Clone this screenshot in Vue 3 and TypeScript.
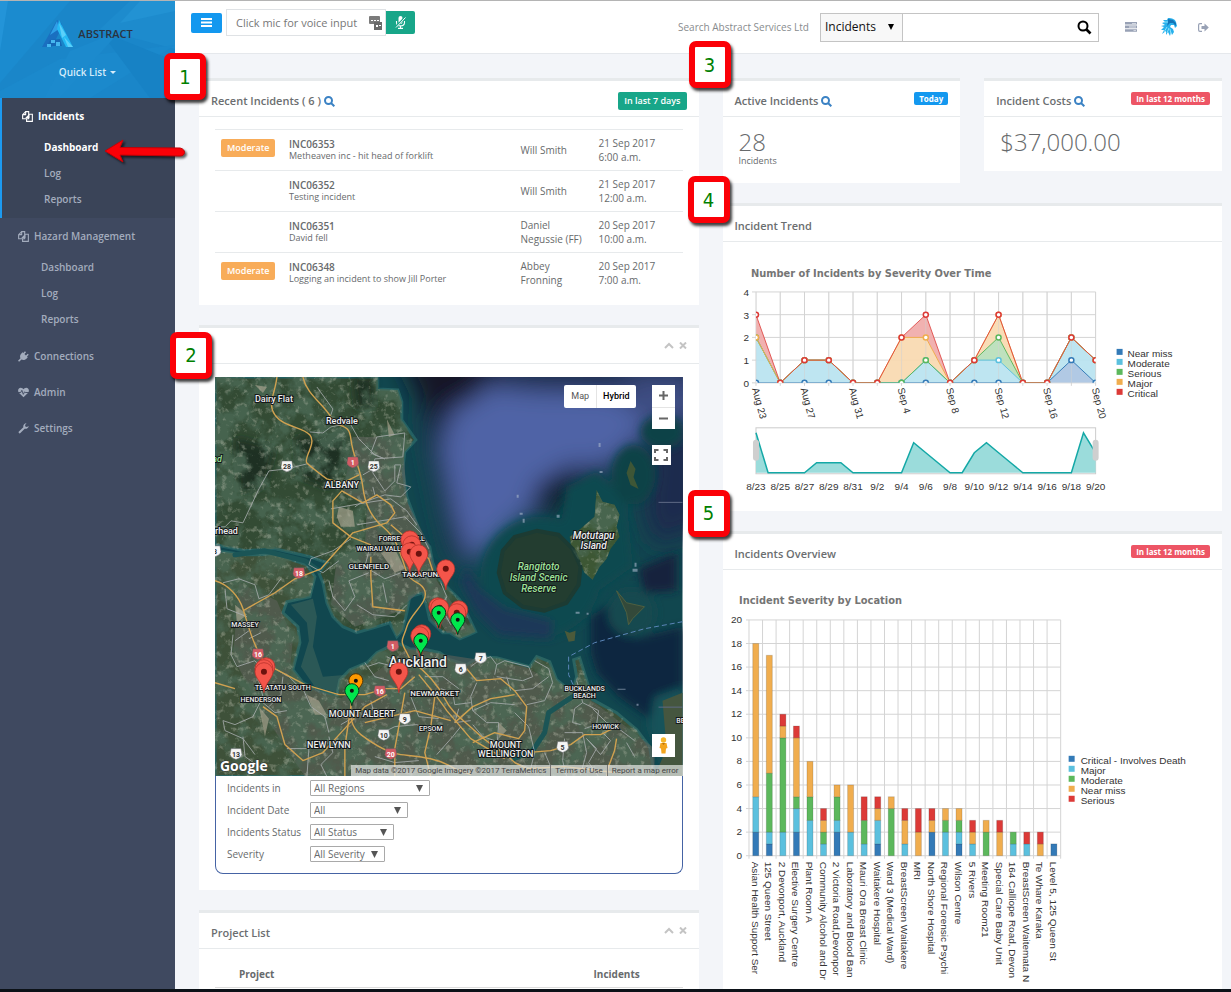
<script setup lang="ts">
interface NavGroup { label: string; icon: string; active?: boolean; items: string[] }
interface Incident { severity: string; code: string; title: string; person: string; date: string; time: string }
interface MapLabel { x: number; y: number; size: number; text: string; green?: boolean }
interface Shield { x: number; y: number; text: string; red?: boolean }
interface Pin { x: number; y: number; kind: 'red' | 'green' | 'orange' }

const navGroups: NavGroup[] = [
  { label: 'Incidents', icon: 'copy', active: true, items: ['Dashboard', 'Log', 'Reports'] },
  { label: 'Hazard Management', icon: 'copy', items: ['Dashboard', 'Log', 'Reports'] },
  { label: 'Connections', icon: 'plug', items: [] },
  { label: 'Admin', icon: 'heart', items: [] },
  { label: 'Settings', icon: 'wrench', items: [] },
]

const incidents: Incident[] = [
  { severity: 'Moderate', code: 'INC06353', title: 'Metheaven inc - hit head of forklift', person: 'Will Smith', date: '21 Sep 2017', time: '6:00 a.m.' },
  { severity: '', code: 'INC06352', title: 'Testing incident', person: 'Will Smith', date: '21 Sep 2017', time: '12:00 a.m.' },
  { severity: '', code: 'INC06351', title: 'David fell', person: 'Daniel Negussie (FF)', date: '20 Sep 2017', time: '10:00 a.m.' },
  { severity: 'Moderate', code: 'INC06348', title: 'Logging an incident to show Jill Porter', person: 'Abbey Fronning', date: '20 Sep 2017', time: '7:00 a.m.' },
]

const filters = [
  { id: 'regions', label: 'Incidents in', value: 'All Regions', size: 'w-xl' },
  { id: 'date', label: 'Incident Date', value: 'All', size: 'w-lg' },
  { id: 'status', label: 'Incidents Status', value: 'All Status', size: 'w-md' },
  { id: 'severity', label: 'Severity', value: 'All Severity', size: 'w-sm' },
]

const palette = ['#337ab7', '#5bc0de', '#5cb85c', '#f0ad4e', '#dc3a37']

/* Severity trend */
const trend = { left: 33, right: 373, top: 50, bottom: 141 }
const trendX = (i: number) => trend.left + (i * (trend.right - trend.left)) / 14
const trendY = (v: number) => trend.bottom - (v * (trend.bottom - trend.top)) / 4
const trendSeries = [
  { name: 'Near miss', values: [0, 0, 0, 0, 0, 0, 0, 0, 0, 0, 0, 0, 0, 1, 0] },
  { name: 'Moderate', values: [2, 0, 1, 1, 0, 0, 0, 1, 0, 1, 1, 0, 0, 2, 1] },
  { name: 'Serious', values: [2, 0, 1, 1, 0, 0, 0, 1, 0, 1, 2, 0, 0, 2, 1] },
  { name: 'Major', values: [2, 0, 1, 1, 0, 0, 2, 2, 0, 1, 3, 0, 0, 2, 1] },
  { name: 'Critical', values: [3, 0, 1, 1, 0, 0, 2, 3, 0, 1, 3, 0, 0, 2, 1] },
]
const fills = ['#aac4e2', '#b9e3f0', '#b9deb9', '#f9d9b0', '#f0aaa9']
const trendLine = (values: number[]) => values.map((v, i) => `${trendX(i)},${trendY(v)}`).join(' ')
const trendArea = (s: number) => {
  const base = s === 0 ? trendSeries[0].values.map(() => 0) : trendSeries[s - 1].values
  const back = base.map((v, i) => `${trendX(i)},${trendY(v)}`).reverse().join(' ')
  return `${trendLine(trendSeries[s].values)} ${back}`
}
const trendTicks = ['Aug 23', 'Aug 27', 'Aug 31', 'Sep 4', 'Sep 8', 'Sep 12', 'Sep 16', 'Sep 20']
const rangeTicks = ['8/23', '8/25', '8/27', '8/29', '8/31', '9/2', '9/4', '9/6', '9/8', '9/10', '9/12', '9/14', '9/16', '9/18', '9/20']
const rangeValues = [4, 0, 0, 0, 0, 1, 1, 1, 0, 0, 0, 0, 0, 3, 2, 1, 0, 0, 2, 3, 2, 1, 0, 0, 0, 0, 0, 4, 2]
const rangePoints = rangeValues.map((v, i) => `${trend.left + (i * 340) / 28},${231 - v * 10}`).join(' ')

/* Severity by location */
const bars = { left: 26, right: 338, top: 50, bottom: 286 }
const step = (bars.right - bars.left) / 23
const unit = (bars.bottom - bars.top) / 20
const overviewLegend = ['Critical - Involves Death', 'Major', 'Moderate', 'Near miss', 'Serious']
const locations: { name: string; stack: number[] }[] = [
  { name: 'Asian Health Support Ser', stack: [2, 3, 0, 13, 0] },
  { name: '125 Queen Street', stack: [1, 1, 5, 10, 0] },
  { name: '2 Devonport, Auckland', stack: [0, 2, 8, 1, 1] },
  { name: 'Elective Surgery Centre', stack: [2, 2, 1, 5, 1] },
  { name: 'Plant Room A', stack: [0, 3, 2, 3, 0] },
  { name: 'Community Alcohol and Dr', stack: [0, 1, 1, 1, 1] },
  { name: '2 Victoria Road,Devonpor', stack: [2, 1, 2, 1, 0] },
  { name: 'Laboratory and Blood Ban', stack: [0, 2, 0, 4, 0] },
  { name: 'Mauri Ora Breast Clinic', stack: [0, 1, 2, 0, 2] },
  { name: 'Waitakere Hospital', stack: [1, 2, 0, 1, 1] },
  { name: 'Ward 3 (Medical Ward)', stack: [0, 0, 4, 1, 0] },
  { name: 'BreastScreen Waitakere', stack: [0, 1, 0, 2, 1] },
  { name: 'MRI', stack: [0, 0, 0, 2, 2] },
  { name: 'North Shore Hospital', stack: [2, 0, 0, 1, 1] },
  { name: 'Regional Forensic Psychi', stack: [0, 2, 1, 1, 0] },
  { name: 'Wilson Centre', stack: [1, 1, 1, 1, 0] },
  { name: '5 Rivers', stack: [0, 1, 0, 1, 1] },
  { name: 'Meeting Room21', stack: [0, 0, 2, 1, 0] },
  { name: 'Special Care Baby Unit', stack: [0, 0, 0, 2, 1] },
  { name: '164 Calliope Road, Devon', stack: [0, 1, 1, 0, 0] },
  { name: 'BreastScreen Waitemata N', stack: [0, 1, 0, 0, 1] },
  { name: 'Te Whare Karaka', stack: [0, 0, 0, 1, 1] },
  { name: 'Level 5, 125 Queen St', stack: [1, 0, 0, 0, 0] },
]
const segments = locations.flatMap((loc, i) => {
  let total = 0
  return loc.stack.map((v, s) => {
    total += v
    return { x: bars.left + step * (i + 0.5) - 3, y: bars.bottom - total * unit, h: v * unit, color: palette[s] }
  }).filter((seg) => seg.h > 0)
})

/* Map */
const north = 'M0 0H163V12L183 13L187 25V43L201 63L190 75L188 92L192 120L198 136L203 150L207 160L215 170L218 186L225 203L235 213L245 223L252 236L261 255L255 258L245 262L235 256L228 256L215 243L212 230L208 216L195 220L192 236L188 253L182 260L175 246L162 250L142 256L128 250L118 240L112 226L108 206L104 196L112 186L95 180L60 172L30 174L0 168Z'
const west = 'M0 174L30 178L62 178L92 188L100 200L95 220L72 225L68 236L83 250L85 266L78 293L88 306L105 315L122 318L125 303L135 293L152 286L162 276L182 266L195 272L212 273L225 276L235 283L252 288L265 280L282 281L315 290L322 280L335 285L342 303L358 316L362 300L359 283L365 281L371 300L378 323L402 336L422 353L435 370L440 400H0Z'
const motutapu = 'M382 113L388 125L400 128L405 138L402 150L405 160L396 172L392 182L385 190L378 203L370 196L363 182L357 172L355 160L366 152L380 140Z'
const rangitoto = 'M300 160L322 154L344 158L358 172L366 190L364 208L352 226L330 234L308 230L290 216L284 196L288 174Z'
const highways = [
  'M62 0C60 18 52 26 60 38S88 50 95 58S88 82 92 86S104 96 112 102L127 106',
  'M88 0C92 18 108 26 116 40S134 44 136 62S146 92 148 110S156 140 168 150S184 170 190 190S206 202 210 214S196 236 192 250S184 262 192 276L196 284',
  'M0 204C14 208 24 220 28 232S36 262 44 276S50 288 56 290L90 308L124 318H150L170 312L186 312L200 300',
  'M28 234L60 216L80 202L106 192L122 174L138 156L172 146L180 136L176 128L162 118L148 126L127 114L118 124V146L136 160L156 168',
  'M128 106L144 98M176 148L190 160L214 182L218 194M156 180V200L158 230L190 234',
  'M138 320C132 340 138 352 146 358S170 376 186 378S220 380 240 392L256 398',
  'M48 330L62 340L70 368L88 384L108 376L128 354L150 330L172 318',
  'M196 284C210 294 222 306 230 322S250 344 262 356S288 374 300 386L312 392L350 390L400 396M204 298C214 310 224 322 232 334L256 362L290 382',
  'M252 292L262 304L286 302L300 314L312 330L310 354L304 362L280 356L258 366M240 346L258 330L276 322L300 318M312 376L336 374L356 368L370 358L386 358L402 350M402 362L400 374L394 390L392 400',
  'M190 316L184 350L180 372V400M220 320L216 350L210 376L216 400M130 400V370L136 330M0 306L20 312M150 346L200 334L236 344',
]
const streets = [
  'M102 10L118 32L116 38M95 55L108 56L116 50L136 46M136 48L144 62L160 78L170 82L156 76L162 60L190 56L188 80L160 82L158 96L170 114L180 104V88L186 88L182 106L196 110L186 120L170 118L146 126L140 130',
  'M92 87L72 92L54 94L44 112L28 146L16 144L10 150H0',
  'M148 98L162 90M158 110L160 118M116 132L150 126L176 122L192 134L202 148M142 148L190 140L206 156L214 172M136 162L118 174L96 182L94 188L108 196L124 184M154 174L150 190L170 202L186 196',
  'M114 204L118 220L130 234L140 220L134 204L154 196M142 228L158 238L180 240L192 228M168 206L172 226M226 206L232 220L226 230L236 248',
  'M8 206L24 202L40 208L44 222L54 218L66 202M10 212L12 232L32 240M18 258L16 278L22 290L40 284L46 292M20 264L34 254M34 262L46 256M60 292L74 300L84 310M68 300L66 318L54 330M40 290L48 320L38 340L20 348L8 344L10 354L28 362L40 378M48 326L60 336L72 334M28 360L30 380L50 394M88 312L96 330L110 340L114 356M72 372L94 372L92 400',
  'M114 360L118 376L106 388L112 400M126 348L140 340L128 336M150 286L160 300L174 304M152 290L164 286L180 290L196 282M172 280L192 290L212 286M200 278L208 292L222 280M210 300L228 300L244 312M156 324L160 340L178 338M164 358L180 350L202 348L222 356M160 380L180 386L204 384M196 320L204 340L224 342M226 312L238 316L240 328L256 326M222 378L238 360L246 350',
  'M256 290L264 284L276 280L282 288L280 298M282 288L290 284L314 290L318 300L308 304L282 300M320 284L334 292L338 306L330 324L312 328M300 314L318 312L334 300M262 306L256 320L258 334L272 346L284 346L282 376M258 334L276 326L300 328M292 300L296 314M258 348L268 360L280 364M244 332L240 346L256 344M300 336L314 350L320 376L316 392L300 386',
  'M362 304L366 316L368 326L360 332L358 346L366 348M368 326L384 334L382 348L370 352M378 332L392 346L404 350M350 356L368 356L372 376L366 398M350 362L348 384L352 400M372 362L382 372L374 386L384 400M388 356L396 364L386 378L372 362M404 352L420 364M412 366L420 380M330 376L336 390',
]
const labels: MapLabel[] = [
  { x: 59, y: 25, size: 9, text: 'Dairy Flat' }, { x: 127, y: 47, size: 9, text: 'Redvale' },
  { x: 127, y: 111, size: 9, text: 'ALBANY' }, { x: 9, y: 157, size: 9, text: 'erhead' }, { x: 2, y: 85, size: 9, text: 'ad', green: true },
  { x: 187, y: 164, size: 7, text: 'FORREST HILL' }, { x: 168, y: 174, size: 7, text: 'WAIRAU VALLEY' },
  { x: 154, y: 192, size: 8, text: 'GLENFIELD' }, { x: 208, y: 200, size: 8, text: 'TAKAPUNA' },
  { x: 379, y: 162, size: 10, text: 'Motutapu' }, { x: 379, y: 172, size: 10, text: 'Island' },
  { x: 324, y: 193, size: 10, text: 'Rangitoto', green: true }, { x: 324, y: 204, size: 10, text: 'Island Scenic', green: true }, { x: 324, y: 215, size: 10, text: 'Reserve', green: true },
  { x: 30, y: 250, size: 7, text: 'MASSEY' }, { x: 68, y: 313, size: 7, text: 'TE ATATU SOUTH' }, { x: 46, y: 325, size: 7, text: 'HENDERSON' },
  { x: 203, y: 290, size: 14, text: 'Auckland' }, { x: 220, y: 319, size: 8, text: 'NEWMARKET' },
  { x: 147, y: 340, size: 9, text: 'MOUNT ALBERT' }, { x: 216, y: 354, size: 7, text: 'EPSOM' }, { x: 114, y: 371, size: 9, text: 'NEW LYNN' },
  { x: 370, y: 314, size: 7, text: 'BUCKLANDS' }, { x: 370, y: 321, size: 7, text: 'BEACH' }, { x: 391, y: 352, size: 7, text: 'HOWICK' },
  { x: 291, y: 371, size: 9, text: 'MOUNT' }, { x: 291, y: 380, size: 9, text: 'WELLINGTON' }, { x: 466, y: 346, size: 7, text: 'BE' },
]
const shields: Shield[] = [
  { x: 138, y: 85, text: '1', red: true }, { x: 72, y: 89, text: '28' }, { x: 159, y: 89, text: '25' }, { x: 0, y: 174, text: '3' },
  { x: 84, y: 196, text: '18', red: true }, { x: 43, y: 277, text: '16', red: true }, { x: 178, y: 269, text: '1', red: true },
  { x: 165, y: 314, text: '16', red: true }, { x: 190, y: 342, text: '9' }, { x: 169, y: 358, text: '10' }, { x: 176, y: 377, text: '20', red: true },
  { x: 21, y: 377, text: '13' }, { x: 266, y: 281, text: '7' }, { x: 246, y: 292, text: '6' }, { x: 348, y: 370, text: '5' },
]
const pins: Pin[] = [
  { x: 195, y: 163, kind: 'red' }, { x: 197, y: 168, kind: 'red' }, { x: 195, y: 175, kind: 'red' }, { x: 204, y: 177, kind: 'red' }, { x: 231, y: 192, kind: 'red' },
  { x: 223, y: 230, kind: 'red' }, { x: 225, y: 231, kind: 'red' }, { x: 224, y: 236, kind: 'green' },
  { x: 244, y: 233, kind: 'red' }, { x: 242, y: 236, kind: 'red' }, { x: 243, y: 243, kind: 'green' },
  { x: 207, y: 257, kind: 'red' }, { x: 205, y: 259, kind: 'red' }, { x: 206, y: 264, kind: 'green' },
  { x: 51, y: 290, kind: 'red' }, { x: 49, y: 292, kind: 'red' }, { x: 49, y: 295, kind: 'red' }, { x: 184, y: 295, kind: 'red' },
  { x: 141, y: 304, kind: 'orange' }, { x: 137, y: 314, kind: 'green' },
]
const pinFill = { red: '#f4554a', green: '#00e64d', orange: '#ff9900' }
const pinEdge = { red: '#b8322b', green: '#04381a', orange: '#5a3500' }
</script>

<template>
  <div class="screen">
    <div class="shell">
      <aside class="sidebar">
        <div class="brand">
          <svg class="brand-bg" viewBox="0 0 175 97" preserveAspectRatio="none" aria-hidden="true">
            <rect width="175" height="97" fill="#1a86c9" />
            <path d="M0 0H70L0 82Z" fill="#1b8bcf" /><path d="M8 0L0 50V0Z" fill="#2394d8" />
            <path d="M130 0L100 28L175 48V0Z" fill="#1d8bcd" /><path d="M140 0L120 22L175 10V0Z" fill="#2292d3" />
            <path d="M175 44L60 58L0 90V97H90Z" fill="#1b89cc" /><path d="M100 30L175 60V97H150Z" fill="#1782c5" />
            <path d="M70 50L120 30L60 97H44Z" fill="#1c8acd" />
          </svg>
          <div class="logo">
            <svg width="32" height="28" viewBox="0 0 32 28" aria-hidden="true">
              <path d="M15 0L0 27H10L18 11L20 4Z" fill="#1a6fc0" /><path d="M15 1L8 15L17 9Z" fill="#2f9fe6" />
              <path d="M17 0L31 27H24L15 9Z" fill="#25b9f3" /><path d="M17 3L24 15L20 18Z" fill="#5bd0fa" /><path d="M22 17L31 27H26Z" fill="#5bd0fa" />
              <path d="M8 20L18 19L20 26H5Z" fill="#1667b5" /><path d="M9 20h4v3h-4zM14 22h4v4h-4zM5 24h4v3h-4z" fill="#45b6ee" />
            </svg>
            <span>ABSTRACT</span>
          </div>
          <button class="quick" type="button">Quick List <span class="caret"></span></button>
        </div>
        <nav>
          <div v-for="group in navGroups" :key="group.label" class="group" :class="{ active: group.active, leaf: !group.items.length }">
            <a href="#" class="title">
              <svg width="11" height="11" viewBox="0 0 12 12" aria-hidden="true">
                <g v-if="group.icon === 'copy'" fill="none" stroke="currentColor" stroke-width="1.2">
                  <path d="M4 3V.7H7.3V8.4H.7V4L4 .7M.7 4H4V3" /><path d="M7.3 3.6H11.3V11.3H5V8.4M5 7L7.5 4.4V7Z" />
                </g>
                <path v-else-if="group.icon === 'plug'" fill="currentColor" d="M7.6.2L8.8 1.300 7 3.300 8.600 4.900 10.600 3 11.700 4.200 9.800 6.100 10.600 6.900 9.700 7.800C8.300 9.600 5.700 10.300 3.800 9.200L1.200 11.800 0 10.600 2.700 8C1.700 6.200 2.300 3.700 4.200 2.300L5 1.400 5.800 2.100Z" />
                <g v-else-if="group.icon === 'heart'">
                  <path fill="currentColor" d="M6 11.300L.9 6.300C-.6 4.300 0 1 3 .8 4.400.8 5.400 1.600 6 2.500 6.600 1.600 7.600.8 9 .8 12 1 12.600 4.300 11.100 6.300Z" />
                  <path d="M0 6H3L4.200 3.600 5.800 8 7.200 5.200 8 6H12" fill="none" stroke="#3f4960" stroke-width="1" />
                </g>
                <path v-else fill="currentColor" d="M11.700 3.200C11.400 5.600 9.300 6.700 7.300 6.200L2.600 11C1.500 12.100 0 10.500 1 9.400L5.800 4.700C5.300 2.300 7.200.1 9.300.4L7.700 2.200 8 3.800 9.700 4.300Z" />
              </svg>
              {{ group.label }}
            </a>
            <a v-for="(item, i) in group.items" :key="item" href="#" class="sub" :class="{ current: group.active && i === 0 }">
              {{ item }}
              <svg v-if="group.active && i === 0" class="arrow" width="86" height="26" viewBox="0 0 86 26" aria-hidden="true">
                <path d="M1 13L19 2 16 9.500 76 10C82 11 82 18 76 18L16 17 19 24Z" fill="#fb0007" stroke="#c40006" stroke-width="1" />
              </svg>
            </a>
          </div>
        </nav>
      </aside>

      <div class="main">
        <header class="topbar">
          <div class="voice">
            <button type="button" class="menu" aria-label="Toggle menu">
              <svg width="11" height="9" viewBox="0 0 11 9" aria-hidden="true"><path d="M0 0h11v2H0zM0 3.500h11v2H0zM0 7h11v2H0z" fill="#fff" /></svg>
            </button>
            <div class="voice-box">
              <input type="text" aria-label="Voice input" placeholder="Click mic for voice input" />
              <svg width="13" height="14" viewBox="0 0 13 14" aria-hidden="true">
                <path d="M1 0H10Q11 0 11 1V8H1Q0 8 0 7V1Q0 0 1 0Z" fill="#7b7b7b" /><path d="M5 6H13V14H5Z" fill="#6a6a6a" />
                <path d="M2 4h2v1H2zM5 4h2v1H5zM8 4h2v1H8zM7 9h2v2H7zM10 9h2v1h-2z" fill="#fff" />
              </svg>
            </div>
            <button type="button" class="mic" aria-label="Microphone">
              <svg width="11" height="13" viewBox="0 0 11 13" aria-hidden="true">
                <rect x="3.500" y="0" width="4" height="8" rx="2" fill="#fff" /><path d="M1.500 5V6.500C1.500 11 9.500 11 9.500 6.500V5M5.500 10V12.500M3 12.400H8" fill="none" stroke="#fff" stroke-width="1.100" />
                <path d="M10.500 1L.8 11" stroke="#18a689" stroke-width="2" /><path d="M10.500 1.500L1 11.500" stroke="#fff" stroke-width="1" />
              </svg>
            </button>
          </div>
          <div class="finder">
            <label for="search-text">Search Abstract Services Ltd</label>
            <div class="search">
              <div class="pick">
                <select aria-label="Search in"><option>Incidents</option></select>
                <svg width="6" height="6" viewBox="0 0 6 6" aria-hidden="true"><path d="M0 0H6L3 6Z" fill="#000" /></svg>
              </div>
              <input id="search-text" type="text" />
              <button type="button" aria-label="Search">
                <svg width="15" height="15" viewBox="0 0 15 15" aria-hidden="true"><circle cx="6" cy="6" r="4.500" fill="none" stroke="#000" stroke-width="2" /><path d="M9.500 9.500L13.500 13.500" stroke="#000" stroke-width="2.600" /></svg>
              </button>
            </div>
            <button type="button" class="icon-btn tasks" aria-label="Tasks">
              <svg width="12" height="10" viewBox="0 0 12 10" aria-hidden="true"><path d="M0 0h12v2.600H0zM0 3.600h12v2.600H0zM0 7.200h12v2.600H0z" fill="#98a1b5" /><path d="M7 1h4v.8H7zM4 4.600h7v.8H4zM8.500 8.200H11V9H8.500z" fill="#e4e7ee" /></svg>
            </button>
            <button type="button" class="icon-btn lion" aria-label="Profile">
              <svg width="17" height="19" viewBox="0 0 17 19" aria-hidden="true">
                <path d="M1 5L4 4 2 2 6 2 7 0C11 0 14 1 15 4L16 8 14 10 13 7 10 7 9 9 12 11 13 14 11 17 10 14 9 18 7 14 5 17 5 13 1 16 3 12 0 12 3 9 0 8 4 7Z" fill="#27b0ec" />
                <path d="M7 1L12 2 15 5 15 8 12 5 9 5 6 8 7 4Z" fill="#1374b8" /><path d="M6 9L3 14M8 10L6 15M9 11L10 16M3 4L7 4" stroke="#8be0fb" stroke-width="1" fill="none" />
              </svg>
            </button>
            <button type="button" class="icon-btn out" aria-label="Sign out">
              <svg width="11" height="9" viewBox="0 0 11 9" aria-hidden="true"><path d="M4 .7H2Q.6.700.6 2V7Q.6 8.300 2 8.300H4" fill="none" stroke="#98a1b5" stroke-width="1.200" /><path d="M3.500 3H6.500V.6L10.800 4.500 6.500 8.400V6H3.500Z" fill="#98a1b5" /></svg>
            </button>
          </div>
        </header>

        <main class="columns">
          <div class="column">
            <section class="card">
              <span class="callout c1">1</span>
              <div class="head">
                <h2>Recent Incidents ( 6 ) <svg class="mag" width="11" height="11" viewBox="0 0 11 11" aria-hidden="true"><circle cx="4.500" cy="4.500" r="3.500" /><path d="M7 7L10.300 10.300" /></svg></h2>
                <span class="badge teal">In last 7 days</span>
              </div>
              <div class="body list-body">
                <table class="incidents">
                  <tbody>
                    <tr v-for="row in incidents" :key="row.code">
                      <td class="sev"><span v-if="row.severity" class="badge orange">{{ row.severity }}</span></td>
                      <td class="what"><strong>{{ row.code }}</strong><small>{{ row.title }}</small></td>
                      <td class="who">{{ row.person }}</td>
                      <td class="when">{{ row.date }}<br />{{ row.time }}</td>
                    </tr>
                  </tbody>
                </table>
              </div>
            </section>

            <section class="card">
              <span class="callout c2">2</span>
              <div class="head">
                <h2></h2>
                <div class="tools">
                  <button type="button" aria-label="Collapse"><svg width="10" height="7" viewBox="0 0 10 7"><path d="M1 6L5 2L9 6" /></svg></button>
                  <button type="button" aria-label="Close"><svg width="8" height="7" viewBox="0 0 8 7"><path d="M1 .5L7 6.500M7 .5L1 6.500" /></svg></button>
                </div>
              </div>
              <div class="body map-body">
                <div class="map">
                  <svg class="map-art" viewBox="0 0 468 400" role="img" aria-label="Hybrid map of Auckland">
                    <defs>
                      <filter id="soft" x="-30%" y="-30%" width="160%" height="160%"><feGaussianBlur stdDeviation="12" /></filter>
                      <filter id="edge" x="-20%" y="-20%" width="140%" height="140%"><feGaussianBlur stdDeviation="4" /></filter>
                      <filter id="forest" x="0" y="0" width="100%" height="100%">
                        <feTurbulence type="fractalNoise" baseFrequency="0.04" numOctaves="5" seed="7" />
                        <feColorMatrix values="0 0 0 0 0.07  0 0 0 0 0.14  0 0 0 0 0.09  5 0 0 0 -2.1" />
                      </filter>
                      <filter id="fields" x="0" y="0" width="100%" height="100%">
                        <feTurbulence type="fractalNoise" baseFrequency="0.16" numOctaves="4" seed="21" />
                        <feColorMatrix values="0 0 0 0 0.52  0 0 0 0 0.54  0 0 0 0 0.44  0 4 0 0 -2.2" />
                      </filter>
                      <clipPath id="land"><path :d="north" /><path :d="west" /><path :d="motutapu" /></clipPath>
                    </defs>
                    <rect width="468" height="400" fill="#11474f" />
                    <g filter="url(#soft)">
                      <path d="M200 -20H490V92L420 78L392 104L350 116L325 140L286 150L262 190L235 180L222 120L212 70Z" fill="#1e2b49" />
                      <path d="M250 6L320 14L400 16L440 45L400 84L350 94L316 130L280 165L255 184L240 140L226 70Z" fill="#4f63a6" />
                      <path d="M180 -30H296L262 22L214 40Z" fill="#141826" />
                      <path d="M440 60H490V150L440 170L428 130Z" fill="#1e2c4e" />
                      <path d="M400 0H480V50H450Z" fill="#3f4f86" />
                      <path d="M318 110L362 84L360 112L330 142Z" fill="#0e1224" />
                    </g>
                    <g filter="url(#edge)">
                      <circle cx="326" cy="200" r="60" fill="#10494f" /><path d="M352 110L382 94L412 124L418 190L384 214L340 190Z" fill="#10494f" />
                      <ellipse cx="419" cy="98" rx="22" ry="30" fill="#0b4346" /><ellipse cx="448" cy="55" rx="22" ry="17" fill="#0b4346" />
                      <path d="M252 190L264 212L290 232L338 244L336 262L284 258L262 236L246 206Z" fill="#1f3759" />
                      <path d="M376 240L400 224L420 262L468 250V316L446 320L440 346L404 320L382 296L376 276Z" fill="#10263f" />
                      <path d="M424 192L462 176V214L430 216Z" fill="#13243d" />
                      <circle cx="417" cy="236" r="24" fill="#134a50" />
                      <path d="M468 310L440 320L434 350L448 390H468Z" fill="#17535a" />
                    </g>
                    <g stroke="#246062" stroke-width="3" fill="#334b34"><path :d="north" /></g>
                    <path :d="west" fill="#3e5139" stroke="#2a6462" stroke-width="3" />
                    <path d="M76 228L92 246L94 264L86 290L100 310L122 316L132 298L108 300L98 270L102 240L98 222Z" fill="#5b7765" opacity=".35" />
                    <path :d="motutapu" fill="#3d5734" /><path :d="rangitoto" fill="#233d30" stroke="#1c3b33" stroke-width="4" stroke-linejoin="round" />
                    <path d="M416 84L421 92L419 100L424 112L416 108L412 96Z" fill="#3e5636" />
                    <path d="M402 214L412 226L430 230L418 242L414 248L412 236Z" fill="#33493a" stroke="#4e5f40" /><path d="M350 254L355 256L361 254L360 264L354 265Z" fill="#4b5a3a" />
                    <path d="M448 324L468 316V400H440L452 372Z" fill="#45563f" />
                    <path d="M138 60L188 60L192 124L214 168L222 204L258 256L232 256L206 214L180 236L140 250L116 228L122 182L150 170L152 130L128 116L134 84Z" fill="#626661" opacity=".6" />
                    <path d="M24 206L62 224L78 262L74 302L126 322L192 272L310 290L340 306L380 326L440 372V400H90L44 330L18 280Z" fill="#5d615a" opacity=".6" />
                    <path d="M80 60L130 54L134 84L114 112L84 100ZM20 60L60 70L50 110L24 116ZM138 0H158L160 30L142 32Z" fill="#15251b" opacity=".7" filter="url(#edge)" />
                    <g clip-path="url(#land)"><rect width="468" height="400" filter="url(#forest)" opacity=".8" /><rect width="468" height="400" filter="url(#fields)" opacity=".4" /></g>
                    <path d="M124 130L138 134L140 150L126 150L122 140ZM166 176L180 172L190 192L180 196ZM92 318L104 324L112 338L100 338ZM44 330L54 342L50 360ZM40 8L52 10L48 16ZM172 42L180 58L174 60ZM284 346L292 354L284 362ZM20 228L32 238L22 246Z" fill="#b4ab98" opacity=".6" />
                    <path d="M20 178L50 174L90 184L104 194M358 320L334 336L330 356L318 374L300 382" fill="none" stroke="#1b5556" stroke-width="5" stroke-linejoin="round" stroke-linecap="round" />
                    <g fill="none" stroke="#abb0b1" stroke-width="1" stroke-linejoin="round" opacity=".8"><path v-for="d in streets" :key="d" :d="d" /></g>
                    <g fill="none" stroke="#d0a150" stroke-width="1.400" stroke-linejoin="round"><path v-for="d in highways" :key="d" :d="d" /></g>
                    <path d="M468 245L430 252L380 266L354 280V298L362 316" fill="none" stroke="#5b86b8" stroke-dasharray="5 3" />
                    <path d="M444 125.500H468M444 330.500H468" stroke="#5e6a86" stroke-width="1" />
                    <g fill="#a8b8cc" opacity=".6"><path d="M305 136h3v2h-3zM308 142h2v4h-2zM384 66h2v4h-2zM385 94h3v2h-3zM302 118h2v3h-2zM342 138h3v3h-3zM418 192h5v3h-5zM420 186h2v4h-2zM361 235h4v2h-4zM372 236h2v2h-2zM403 312h8v1h-8zM422 327h2v2h-2z" /></g>
                    <g v-for="s in shields" :key="s.text + s.x">
                      <path :transform="`translate(${s.x} ${s.y})`" d="M-5 -5H5L6 1Q6 4 0 6Q-6 4 -6 1Z" :fill="s.red ? '#d25c64' : '#f4f4f4'" stroke="#55595c" stroke-width=".5" />
                      <text class="shield" :class="{ light: s.red }" :x="s.x" :y="s.y + 3">{{ s.text }}</text>
                    </g>
                    <text v-for="l in labels" :key="l.text + l.y" class="place" :class="{ park: l.green, island: l.x === 379 }" :x="l.x" :y="l.y" :font-size="l.size">{{ l.text }}</text>
                    <g v-for="(p, i) in pins" :key="i" :transform="`translate(${p.x} ${p.y})`">
                      <path v-if="p.kind === 'red'" d="M0 21C-1 11 -9 7 -9 0A9 9 0 0 1 9 0C9 7 1 11 0 21Z" :fill="pinFill[p.kind]" :stroke="pinEdge[p.kind]" stroke-width=".8" />
                      <path v-else d="M0 15C-1 8 -7 5 -7 0A7 7 0 0 1 7 0C7 5 1 8 0 15Z" :fill="pinFill[p.kind]" :stroke="pinEdge[p.kind]" stroke-width="1" />
                      <circle :r="p.kind === 'red' ? 3 : 2" :fill="p.kind === 'red' ? '#6b120e' : '#111'" />
                    </g>
                    <text class="google" x="5" y="394">Google</text>
                  </svg>
                  <div class="types"><button type="button">Map</button><button type="button" class="on">Hybrid</button></div>
                  <div class="zoom">
                    <button type="button" aria-label="Zoom in"><svg width="9" height="9" viewBox="0 0 9 9"><path d="M4.500 0V9M0 4.500H9" /></svg></button>
                    <button type="button" aria-label="Zoom out"><svg width="9" height="9" viewBox="0 0 9 9"><path d="M0 4.500H9" /></svg></button>
                  </div>
                  <button type="button" class="full" aria-label="Full screen"><svg width="14" height="12" viewBox="0 0 14 12"><path d="M1 4V1H4.500M9.500 1H13V4M13 8V11H9.500M4.500 11H1V8" /></svg></button>
                  <button type="button" class="pegman" aria-label="Street view"><svg width="11" height="17" viewBox="0 0 11 17"><circle cx="5.500" cy="3" r="2.700" fill="#f6b62a" /><path d="M2.500 6H8.500L9.500 11 8 11.500 7.500 16.500H3.500L3 11.500 1.500 11Z" fill="#f3a51f" /><path d="M4 6L5.500 8 7 6Z" fill="#b8720c" /></svg></button>
                  <div class="credits"><span>Map data ©2017 Google Imagery ©2017 TerraMetrics</span><a href="#">Terms of Use</a><a href="#">Report a map error</a></div>
                </div>
                <form class="filters">
                  <template v-for="f in filters" :key="f.id">
                    <label :for="f.id">{{ f.label }}</label>
                    <div class="pick" :class="f.size">
                      <select :id="f.id"><option>{{ f.value }}</option></select>
                      <svg width="7" height="7" viewBox="0 0 7 7" aria-hidden="true"><path d="M0 0H7L3.500 7Z" fill="#555" /></svg>
                    </div>
                  </template>
                </form>
              </div>
            </section>

            <section class="card">
              <div class="head">
                <h2>Project List</h2>
                <div class="tools">
                  <button type="button" aria-label="Collapse"><svg width="10" height="7" viewBox="0 0 10 7"><path d="M1 6L5 2L9 6" /></svg></button>
                  <button type="button" aria-label="Close"><svg width="8" height="7" viewBox="0 0 8 7"><path d="M1 .5L7 6.500M7 .5L1 6.500" /></svg></button>
                </div>
              </div>
              <div class="body">
                <table class="projects"><thead><tr><th>Project</th><th>Incidents</th></tr></thead></table>
              </div>
            </section>
          </div>

          <div class="column">
            <div class="pair">
              <section class="card">
                <span class="callout c3">3</span>
                <div class="head">
                  <h2>Active Incidents <svg class="mag" width="11" height="11" viewBox="0 0 11 11" aria-hidden="true"><circle cx="4.500" cy="4.500" r="3.500" /><path d="M7 7L10.300 10.300" /></svg></h2>
                  <span class="badge small blue">Today</span>
                </div>
                <div class="figure"><strong>28</strong><small>Incidents</small></div>
              </section>
              <section class="card">
                <div class="head">
                  <h2>Incident Costs <svg class="mag" width="11" height="11" viewBox="0 0 11 11" aria-hidden="true"><circle cx="4.500" cy="4.500" r="3.500" /><path d="M7 7L10.300 10.300" /></svg></h2>
                  <span class="badge small red">In last 12 months</span>
                </div>
                <div class="figure cost"><strong>$37,000.00</strong></div>
              </section>
            </div>

            <section class="card">
              <span class="callout c4">4</span>
              <div class="head"><h2>Incident Trend</h2></div>
              <svg class="chart" viewBox="0 0 500 269" role="img" aria-label="Number of Incidents by Severity Over Time">
                <clipPath id="plot"><rect :x="trend.left" y="46" width="340" height="95" /></clipPath>
                <text class="chart-title" x="28" y="35">Number of Incidents by Severity Over Time</text>
                <g class="grid">
                  <path v-for="n in 5" :key="'h' + n" :d="`M29 ${trendY(n - 1)}H373`" />
                  <path v-for="n in 15" :key="'v' + n" :d="`M${trendX(n - 1)} 50V144`" />
                </g>
                <text v-for="n in 5" :key="'y' + n" class="axis end" x="26" :y="trendY(n - 1) + 4">{{ n - 1 }}</text>
                <g clip-path="url(#plot)">
                  <polygon v-for="(s, i) in trendSeries" :key="'a' + s.name" :points="trendArea(i)" :fill="fills[i]" opacity=".92" />
                  <g class="grid faint"><path v-for="n in 15" :key="'f' + n" :d="`M${trendX(n - 1)} 50V141`" /></g>
                  <polyline v-for="(s, i) in trendSeries" :key="'l' + s.name" :points="trendLine(s.values)" fill="none" :stroke="palette[i]" :opacity="i === 4 ? .8 : 1" />
                  <g v-for="(s, i) in trendSeries" :key="'m' + s.name">
                    <circle v-for="(v, k) in s.values" :key="k" :cx="trendX(k)" :cy="trendY(v)" r="2.500" fill="#fff" :stroke="palette[i]" stroke-width="1.500" />
                  </g>
                </g>
                <text v-for="(t, i) in trendTicks" :key="t" class="axis tick" :transform="`translate(${trendX(i * 2) - 4} 147) rotate(75)`">{{ t }}</text>
                <rect x="33" y="186" width="340" height="46" fill="#fff" stroke="#ccc" />
                <polygon :points="`33,231 ${rangePoints} 373,231`" fill="#9bdcdb" />
                <polyline :points="rangePoints" fill="none" stroke="#14a8a6" stroke-width="1.500" />
                <g fill="#cfcfcf"><rect x="30" y="198" width="6" height="21" rx="3" /><rect x="370" y="198" width="6" height="21" rx="3" /></g>
                <text v-for="(t, i) in rangeTicks" :key="t" class="axis mid" :x="trendX(i)" y="248">{{ t }}</text>
                <g v-for="(s, i) in trendSeries" :key="s.name">
                  <rect x="394" :y="107 + i * 10" width="6" height="6" :fill="palette[i]" /><text class="axis" x="405" :y="115 + i * 10">{{ s.name }}</text>
                </g>
              </svg>
            </section>

            <section class="card">
              <span class="callout c5">5</span>
              <div class="head"><h2>Incidents Overview</h2><span class="badge small red">In last 12 months</span></div>
              <svg class="chart" viewBox="0 0 500 440" role="img" aria-label="Incident Severity by Location">
                <text class="chart-title" x="16" y="34">Incident Severity by Location</text>
                <g class="grid">
                  <path v-for="n in 11" :key="'h' + n" :d="`M23 ${bars.bottom - (n - 1) * 2 * unit}H338`" />
                  <path v-for="n in 24" :key="'v' + n" :d="`M${bars.left + (n - 1) * step} 50V289`" />
                </g>
                <text v-for="n in 11" :key="'y' + n" class="axis end" x="19" :y="bars.bottom - (n - 1) * 2 * unit + 3">{{ (n - 1) * 2 }}</text>
                <rect v-for="(s, i) in segments" :key="i" :x="s.x" :y="s.y" width="6" :height="s.h" :fill="s.color" stroke="#000" stroke-opacity=".15" />
                <text v-for="(l, i) in locations" :key="l.name" class="axis tick" :transform="`translate(${bars.left + (i + 0.5) * step - 4} 292) rotate(90)`">{{ l.name }}</text>
                <g v-for="(t, i) in overviewLegend" :key="t">
                  <rect x="346" :y="186 + i * 10" width="6" height="6" :fill="palette[i]" /><text class="axis" x="358" :y="194 + i * 10">{{ t }}</text>
                </g>
              </svg>
            </section>
          </div>
        </main>
      </div>
    </div>
  </div>
</template>

<style>
html, body { margin: 0; }
</style>

<style scoped>
* { box-sizing: border-box; }
.screen { height: 100vh; overflow: hidden; border-top: 1px solid #b4b4b4; border-bottom: 3px solid #0c1218; font: 10px/14px "Open Sans", "Noto Sans", sans-serif; color: #676a6c; background: #f3f5f9; }
.shell { display: flex; height: 100%; overflow: hidden; }
button, input, select { font: inherit; color: inherit; margin: 0; padding: 0; border: 0; background: none; border-radius: 0; }
button { display: inline-flex; align-items: center; justify-content: center; }
a { color: inherit; text-decoration: none; }

.sidebar { position: relative; z-index: 2; flex: 0 0 175px; background: #3f4960; color: #a3acbd; font-weight: 600; font-size: 10px; }
.brand { position: relative; height: 97px; display: flex; flex-direction: column; align-items: center; padding-top: 19px; background: #1a86c9; }
.brand-bg { position: absolute; inset: 0; width: 100%; height: 100%; }
.logo { position: relative; display: flex; align-items: center; gap: 4px; color: #2b333f; font: 600 11px/28px "Open Sans", sans-serif; }
.quick { position: relative; margin-top: 16px; color: #d5ecfa; font-weight: 600; gap: 4px; line-height: 16px; }
.caret { border: 3px solid transparent; border-top-color: currentColor; border-bottom: 0; }
.group { padding-bottom: 6px; }
.group.leaf { padding-bottom: 0; }
.group.active { background: #3a4458; border-left: 2px solid #1c9af0; color: #a3acbd; }
.title { display: flex; align-items: center; gap: 5px; height: 36px; padding-left: 18px; font-size: 10px; }
.active .title { padding-left: 20px; color: #fff; font-weight: 700; }
.sub { position: relative; display: flex; align-items: center; height: 26px; padding-left: 41px; }
.active .sub { padding-left: 42px; }
.sub.current { color: #fff; font-weight: 700; }
.arrow { position: absolute; left: 102px; top: 4px; z-index: 3; filter: drop-shadow(2px 2px 1px rgba(0, 0, 0, .6)); }

.main { flex: 1; min-width: 0; }
.topbar { display: flex; justify-content: space-between; height: 53px; background: #fff; border-bottom: 1px solid #e5e8ec; padding: 0 22px 0 16px; }
.voice { display: flex; align-items: center; align-self: flex-start; padding-top: 8px; }
.menu { width: 31px; height: 20px; background: #1398ef; border-radius: 2px; margin-right: 4px; }
.voice-box { display: flex; align-items: center; width: 160px; height: 27px; border: 1px solid #dfe2e5; padding: 0 3px 0 9px; }
.voice-box input { flex: 1; min-width: 0; font-size: 11px; outline: 0; }
.voice-box input::placeholder { color: #777; opacity: 1; }
.mic { width: 29px; height: 23px; background: #18a689; border-radius: 0 2px 2px 0; }
.finder { display: flex; align-items: center; font-size: 10px; color: #888b8e; }
.finder label { margin-right: 11px; }
.search { display: flex; height: 29px; border: 1px solid #c4c4c4; color: #111; }
.pick { position: relative; display: flex; }
.pick select { width: 100%; appearance: none; }
.pick svg { position: absolute; top: 4px; right: 6px; pointer-events: none; }
.search .pick { width: 82px; background: #f8f8f8; border-right: 1px solid #c4c4c4; }
.search .pick select { padding-left: 4px; font-size: 12px; }
.search .pick svg { top: 10px; right: 8px; }
.search input { width: 167px; outline: 0; }
.search button { width: 28px; }
.tasks { margin-left: 26px; }
.lion { margin-left: 24px; }
.out { margin-left: 20px; }

.columns { display: grid; grid-template-columns: minmax(0, 1fr) minmax(0, 1fr); gap: 24px; padding: 24px 9px 0 24px; }
.column { display: flex; flex-direction: column; gap: 20px; min-width: 0; }
.pair { display: grid; grid-template-columns: 1fr 1fr; gap: 24px; align-items: start; }
.card { position: relative; background: #fff; border-top: 3px solid #e7eaec; }
.head { display: flex; justify-content: space-between; height: 36px; padding: 0 12px; border-bottom: 1px solid #e7eaec; }
.head h2 { margin: 0; padding-top: 3px; font-size: 11px; line-height: 34px; font-weight: 600; white-space: nowrap; color: #6b6e70; }
.mag { vertical-align: -2px; fill: none; stroke: #3b82c4; stroke-width: 2; }
.badge { display: inline-block; border-radius: 2px; color: #fff; font-size: 9px; font-weight: 600; line-height: 18px; padding: 0 6px; white-space: nowrap; }
.head .badge { align-self: flex-start; margin-top: 11px; }
.badge.small { font-size: 8px; font-weight: 700; line-height: 13px; padding: 0 5px; }
.teal { background: #18a689; }
.orange { background: #f8ac59; }
.blue { background: #1398ef; }
.red { background: #ed5565; }
.body { padding: 12px 16px; }
.list-body { padding-bottom: 11px; }
table { width: 100%; border-collapse: collapse; table-layout: fixed; }
.incidents td { height: 41px; padding: 0; border-top: 1px solid #e7eaec; vertical-align: middle; }
.incidents .sev { width: 74px; padding: 9px 0 0 6px; vertical-align: top; }
.incidents .who { width: 78px; padding-right: 8px; }
.incidents .when { width: 84px; }
.what strong, .what small { display: block; font-size: 10px; line-height: 12px; font-weight: 600; }
.what small { font-size: 9px; font-weight: 400; }

.tools { display: flex; align-items: center; gap: 5px; fill: none; stroke: #c4c4c4; stroke-width: 2; }
.map-body { padding-top: 13px; padding-bottom: 16px; }
.map { position: relative; }
.map-art { display: block; width: 100%; height: auto; }
.place { font-family: Roboto, sans-serif; font-weight: 500; text-anchor: middle; fill: #eee; stroke: #14181a; stroke-width: 2px; paint-order: stroke; }
.place.park { fill: #9fe39a; font-style: italic; }
.place.island { font-style: italic; }
.shield { font: 700 7px Roboto, sans-serif; text-anchor: middle; fill: #333; }
.shield.light { fill: #fff; }
.google { font: 700 14px "Open Sans", sans-serif; fill: #fff; stroke: #333; stroke-width: 1px; paint-order: stroke; }
.map button { background: #fff; }
.types { position: absolute; top: 8px; right: 47px; display: flex; height: 23px; border-radius: 2px; overflow: hidden; font: 9px/14px Roboto, sans-serif; color: #565656; }
.types button { padding: 0 7px; }
.types .on { color: #000; font-weight: 500; padding: 0 6px; border-left: 1px solid #e4e4e4; }
.zoom { position: absolute; top: 8px; right: 8px; width: 23px; display: grid; }
.zoom button { height: 22px; stroke: #666; stroke-width: 2; }
.zoom button + button { border-top: 1px solid #e4e4e4; }
.full { position: absolute; top: 68px; right: 12px; width: 19px; height: 20px; fill: none; stroke: #666; stroke-width: 2; }
.pegman { position: absolute; right: 8px; bottom: 19px; width: 23px; height: 23px; }
.credits { position: absolute; right: 0; bottom: 0; display: flex; height: 11px; background: rgba(226, 228, 226, .72); color: #444; font: 8px/11px Roboto, sans-serif; white-space: nowrap; }
.credits > * { padding: 0 4px; }
.credits a { border-left: 1px solid #777; }
.filters { display: grid; grid-template-columns: 83px 1fr; grid-auto-rows: 22px; align-items: center; padding: 1px 11px 8px; border: 1px solid #4563a4; border-top: 0; border-radius: 0 0 8px 8px; }
.filters .pick { height: 16px; border: 1px solid #a9a9a9; border-radius: 1px; }
.filters select { padding-left: 3px; line-height: 14px; }
.w-xl { width: 120px; }
.w-lg { width: 98px; }
.w-md { width: 84px; }
.w-sm { width: 75px; }
.projects th { height: 26px; padding: 0 0 0 24px; text-align: left; font-weight: 700; border-bottom: 1px solid #ddd; }
.projects th + th { width: 112px; padding-left: 23px; }

.figure { padding: 12px 16px 16px; }
.figure strong { display: block; font-size: 24px; line-height: 26px; font-weight: 300; }
.figure small { display: block; font-size: 9px; line-height: 12px; }
.chart { display: block; width: 100%; height: auto; }
.chart-title { font: 700 11px "DejaVu Sans Condensed", "DejaVu Sans", sans-serif; fill: #757575; }
.axis { font: 10px "Liberation Sans", Arial, sans-serif; fill: #333; }
.end { text-anchor: end; }
.mid { text-anchor: middle; }
.grid { stroke: #d4d4d4; fill: none; }
.faint { opacity: .55; }

.callout { position: absolute; z-index: 5; display: flex; align-items: center; justify-content: center; width: 42px; height: 47px; border: 6px solid #fb0007; border-radius: 7px; background: #fff; color: #008000; font: 20px/24px "DejaVu Sans Condensed", "DejaVu Sans", sans-serif; box-shadow: 2px 3px 3px rgba(0, 0, 0, .75); }
.c1 { left: -35px; top: -28px; }
.c2 { left: -29px; top: 4px; }
.c3 { left: -34px; top: -40px; }
.c4 { left: -35px; top: -30px; }
.c5 { left: -35px; top: -44px; }
</style>
